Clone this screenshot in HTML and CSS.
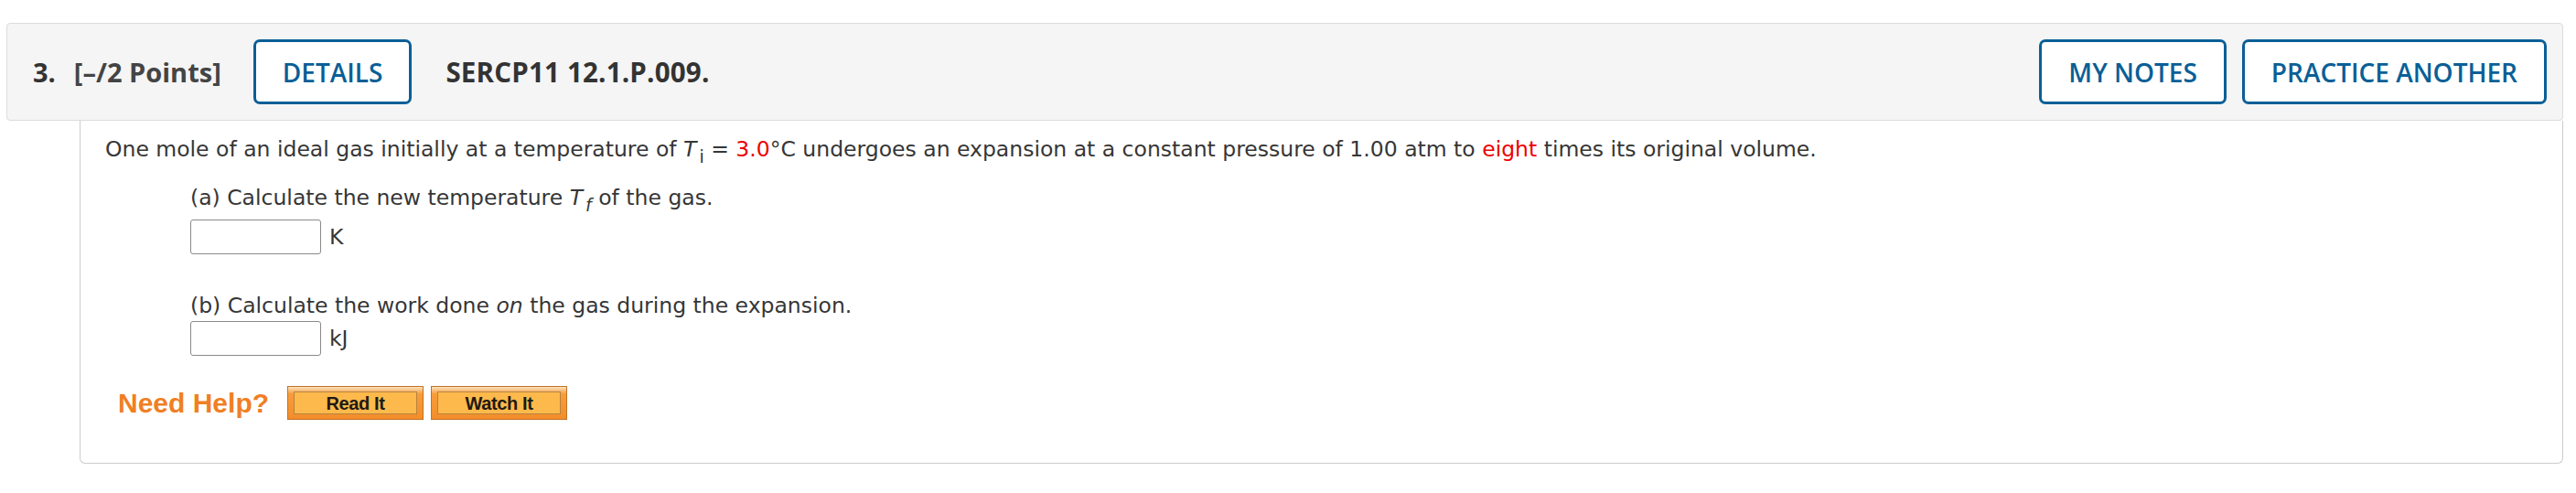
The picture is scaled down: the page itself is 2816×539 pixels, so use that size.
FILE: index.html
```html
<!DOCTYPE html>
<html lang="en">
<head>
<meta charset="utf-8">
<title>Question 3</title>
<link rel="stylesheet" href="styles.css">
</head>
<body>
<div class="question">
  <div class="q-header">
    <div class="q-left">
      <span class="q-num">3.</span>
      <span class="q-points">[–/2 Points]</span>
      <button class="hbtn details">DETAILS</button>
      <span class="q-code">SERCP11 12.1.P.009.</span>
    </div>
    <div class="q-right">
      <button class="hbtn">MY NOTES</button>
      <button class="hbtn">PRACTICE ANOTHER</button>
    </div>
  </div>
  <div class="q-body">
    <p class="stem">One mole of an ideal gas initially at a temperature of <i>T</i><sub>i</sub> = <span class="red">3.0</span>°C undergoes an expansion at a constant pressure of 1.00 atm to <span class="red">eight</span> times its original volume.</p>
    <div class="part part-a">
      <p class="prompt">(a) Calculate the new temperature <i>T</i><sub><i>f</i></sub> of the gas.</p>
      <div class="answer"><span class="box"></span><span class="unit">K</span></div>
    </div>
    <div class="part part-b">
      <p class="prompt">(b) Calculate the work done <i>on</i> the gas during the expansion.</p>
      <div class="answer"><span class="box"></span><span class="unit">kJ</span></div>
    </div>
    <div class="help">
      <span class="help-label">Need Help?</span>
      <span class="obtn"><span class="obtn-in">Read It</span></span>
      <span class="obtn"><span class="obtn-in">Watch It</span></span>
    </div>
  </div>
</div>
</body>
</html>
```
FILE: styles.css
```css
* { box-sizing: border-box; }
html, body { margin: 0; padding: 0; background: #ffffff; }
body { font-family: "DejaVu Sans", Verdana, sans-serif; color: #363636; }

.question { margin: 25px 14px 0 7px; }

.q-header {
  height: 107px;
  background: #f5f5f5;
  border: 1px solid #dcdcdc;
  border-radius: 4px;
  display: flex;
  align-items: center;
  justify-content: space-between;
  padding: 0 17px 0 28px;
  font-family: "Open Sans", sans-serif;
}
.q-left, .q-right { display: flex; align-items: center; }
.q-num { font-weight: 700; font-size: 29px; color: #333; }
.q-points { font-weight: 700; font-size: 29px; color: #444; margin-left: 20px; }
.q-code { font-weight: 700; font-size: 29.5px; letter-spacing: 0.2px; color: #333; margin-left: 37px; }
.hbtn {
  height: 71px;
  padding: 0 29px;
  border: 3px solid #0a5f97;
  border-radius: 7px;
  background: #ffffff;
  color: #0a5f97;
  font-family: "Open Sans", sans-serif;
  font-weight: 600;
  font-size: 28px;
  line-height: 1;
}
.details { margin-left: 35px; }
.q-right .hbtn + .hbtn { margin-left: 17px; }

.q-body {
  margin-left: 80px;
  border: 1px solid #cccccc;
  border-top: none;
  border-radius: 0 0 6px 6px;
  padding: 15px 27px 47px 27px;
  font-size: 23.5px;
  line-height: 32px;
}
.q-body p { margin: 0; }
.red { color: #ee0000; }
sub { font-size: 19px; line-height: 0; vertical-align: -7px; margin-left: 3px; }
i { font-style: italic; }

.part { margin-left: 93px; }
.part-a { margin-top: 21px; }
.part-a .answer { margin-top: 8px; }
.part-b { margin-top: 40px; }
.part-b .answer { margin-top: 1px; }
.answer { display: flex; align-items: center; height: 38px; }
.box {
  width: 143px;
  height: 38px;
  border: 1px solid #8a8a8a;
  border-radius: 3px;
  background: #fff;
}
.unit { margin-left: 9px; }

.help { display: flex; align-items: center; margin-top: 33px; margin-left: 14px; }
.help-label {
  font-family: "Liberation Sans", Arial, sans-serif;
  font-weight: 700;
  font-size: 30px;
  color: #f07f24;
  margin-right: 20px;
}
.obtn {
  display: flex;
  width: 149px;
  height: 37px;
  padding: 5px 6px;
  border: 1px solid #c07328;
  background: linear-gradient(#fbe2bd 0%, #f89c3c 22%, #f38d2a 100%);
}
.obtn + .obtn { margin-left: 8px; }
.obtn-in {
  flex: 1;
  display: flex;
  align-items: center;
  justify-content: center;
  border: 1px solid #b5833f;
  background: #fdb94b;
  font-family: "Liberation Sans", Arial, sans-serif;
  font-weight: 700;
  font-size: 20px;
  letter-spacing: -0.4px;
  color: #1e1a14;
}
```
